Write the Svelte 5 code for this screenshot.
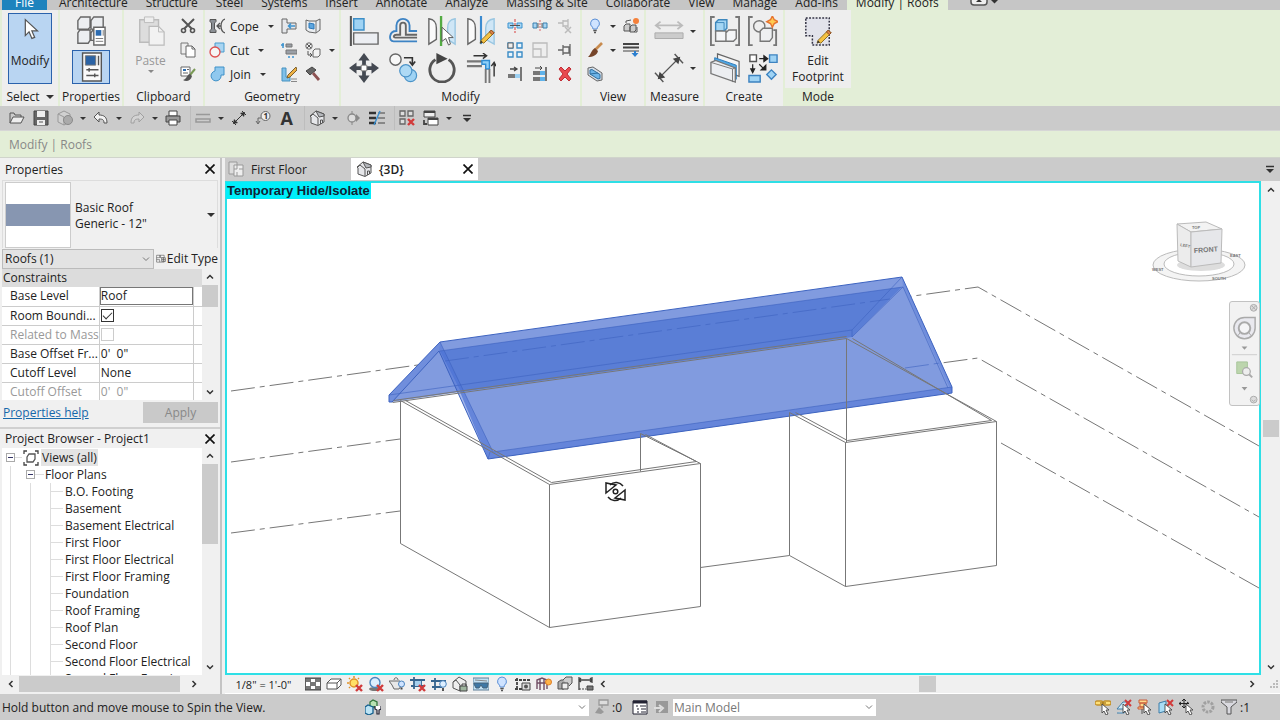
<script lang="ts">
	const menu = [
		'Architecture', 'Structure', 'Steel', 'Systems', 'Insert', 'Annotate', 'Analyze',
		'Massing & Site', 'Collaborate', 'View', 'Manage', 'Add-Ins'
	];

	const floorPlans = [
		'B.O. Footing', 'Basement', 'Basement Electrical', 'First Floor', 'First Floor Electrical',
		'First Floor Framing', 'Foundation', 'Roof Framing', 'Roof Plan', 'Second Floor',
		'Second Floor Electrical', 'Second Floor Framing'
	];

	const quickAccess = [
		'open', 'save', 'sync', 'caret', 'undo', 'caret', 'redo', 'caret', 'print', 'sep',
		'ruler', 'caret', 'dim', 'tag', 'text', 'sep',
		'house', 'caret', 'section', 'thin', 'sep', 'closeViews', 'switch', 'caret', 'more'
	];

	const viewControls = [
		'detail', 'box', 'sun', 'shadow', 'teapot', 'crop', 'cropBulb', 'lock3d', 'glasses',
		'bulb', 'props', 'analytical', 'sets', 'constraint'
	];

	const selectTools = ['links', 'underlay', 'pinned', 'face', 'dragSel', 'ring', 'filter'];

	const cursor = '<path d="M7 5v9l2-2 2 4 2-1-2-4h3z" fill="#fff" stroke="#444" stroke-width=".9"/>';
	const redX = '<path d="M9 9l6 6M15 9l-6 6" stroke="#d13b3b" stroke-width="2.4"/>';
	const bulbShape = '<path d="M8 1a4.5 4.5 0 0 0-2.500 8.200L6 11h4l.5-1.800A4.500 4.500 0 0 0 8 1z" fill="#cfe3ff" stroke="#5b8fd6"/><path d="M6.300 12.500h3.400M7 14.500h2" stroke="#555" stroke-width="1.300"/>';
	const pencil = '<path d="M17 28l-2 1 1-3L27 15l3 3L19 29z" fill="#f5c242" stroke="#8a6a20"/><path d="M25 17l2-2 3 3-2 2z" fill="#d9824b" stroke="#8a4a20"/><path d="M15 29l1-3 2 2z" fill="#333"/>';

	// 16x16 artwork
	const small: Record<string, string> = {
		cut: '<path d="M2 1l10 10M14 1L4 11" stroke="#555" stroke-width="2"/><circle cx="3.500" cy="12.500" r="2" fill="none" stroke="#555" stroke-width="1.600"/><circle cx="12.500" cy="12.500" r="2" fill="none" stroke="#555" stroke-width="1.600"/>',
		copy: '<path d="M1 1h7v11H1z" fill="#eee" stroke="#777"/><path d="M6 4h6l3 3v8H6z" fill="#fff" stroke="#666"/><path d="M12 4v3h3" fill="none" stroke="#666"/>',
		match: '<path d="M1 1h9v9H1z" fill="#fff" stroke="#666"/><path d="M3 3h3v2H3z" fill="#2b6cb0"/><path d="M3 7h5M7 3.500h2" stroke="#666"/><path d="M15 3l-5 6" stroke="#7a9a56" stroke-width="2"/><path d="M10 8c-3 0-3 5-7 6 3 2 8 1 9-4z" fill="#555"/>',
		cope: '<path d="M1 1.500h6v2L5.500 5v6L7 12.500v2H1v-2L2.500 11V5L1 3.500z" fill="#8b8f94" stroke="#555"/><path d="M8 8h4M11 5L8 8l3 3M16 1c-3 1-4 3-4 7s1 6 4 7" stroke="#555" stroke-width="1.300" fill="none"/>',
		cutGeom: '<path d="M6 1h9v9H6z" fill="#a8d5f2" stroke="#4b9bcd"/><circle cx="6" cy="10" r="5" fill="#f5f5f5" stroke="#dd5050" stroke-width="1.300"/>',
		join: '<path d="M6 1h9v8h-3a5 5 0 1 1-6-4z" fill="#8fc8ee" stroke="#3f91c8"/>',
		wallJoin: '<path d="M1 1h5v4l9 0v6H6v4H1z" fill="#e5e7ea" stroke="#666"/><path d="M14 8H8M10 5.500L7.500 8 10 10.500" stroke="#3b93d0" stroke-width="1.500" fill="none"/>',
		beam: '<path d="M5 2h6v3H5zM5 8h11v4H5z" fill="#9a9fa6" stroke="#777"/><path d="M2 1v5M0 3h3M8 14v2M12 14v2" stroke="#3b93d0" stroke-width="1.500"/>',
		paint: '<path d="M1 2v13h8v-4H5V2z" fill="#7ec0ea" stroke="#4792c0"/><path d="M15 1L7 9l-1 3 3-1 7-7z" fill="#eeb042" stroke="#7b6030"/><path d="M10 13h6M10 15.500h6" stroke="#888"/>',
		splitFace: '<path d="M1 2l3 1 7 0 4-2v11l-4 3-7-1-3-2z" fill="#e9ecef" stroke="#666"/><path d="M11 3v12" stroke="#777"/><path d="M4 5l5 1v5l-5-1z" fill="#5da6df" stroke="#2d78b8"/>',
		demolishBox: '<circle cx="4" cy="4" r="3.200" fill="none" stroke="#666"/><path d="M2 6l4-4M2 2l4 4M3 9v4h3M5 11l2 2-2 2" stroke="#555" fill="none"/><path d="M8 9l2-2h5v6l-2 2H8z" fill="#f4f4f4" stroke="#666"/>',
		hammer: '<path d="M1 5l6-4 4 3-6 5z" fill="#666" stroke="#444"/><path d="M8 7l6 7" stroke="#8c5151" stroke-width="2.800"/>',
		split: '<path d="M1 5h5v5H1zM10 5h5v5h-5z" fill="#a8d5f2" stroke="#3b93d0"/><path d="M8 1v14" stroke="#d66" stroke-width="1.300" stroke-dasharray="3 1"/><path d="M3 7.500h10" stroke="#555"/>',
		splitGap: '<path d="M1 5h4v5H1zM11 5h4v5h-4z" fill="#a8d5f2" stroke="#3b80b0"/><path d="M6 5v5M10 5v5" stroke="#666"/><path d="M8 2v12" stroke="#d66" stroke-dasharray="2 1"/>',
		unpin: '<path d="M1 5h5M6 2v7M6 3h5v5H6M11 1v9" stroke="#bbb" fill="none" stroke-width="1.300"/><path d="M8 9l6 6M14 9l-6 6" stroke="#bbb" stroke-width="1.500"/>',
		pin: '<path d="M1 8h5M6 3v10M6 5h6v6H6M13 2v12" stroke="#666" fill="none" stroke-width="1.300"/>',
		array: '<path d="M1 1h5v5H1zM10 1h5v5h-5zM1 10h5v5H1zM10 10h5v5h-5z" fill="#e9f4fb" stroke="#3b8cc6" stroke-width="1.400"/><path d="M1 1h5v5H1z" fill="#eee" stroke="#666"/>',
		scale: '<path d="M1 1h14v14H1zM1 7h8v8" fill="none" stroke="#bcbcbc" stroke-width="1.300"/>',
		trimOne: '<path d="M3 3h6M7 1l3 2-3 2" stroke="#444" fill="none" stroke-width="1.300"/><path d="M1 8h8v4H1z" fill="#777"/><path d="M8 8h5v4H8z" fill="#9cd0f2"/><path d="M14 1v14" stroke="#777" stroke-width="2"/>',
		trimMany: '<path d="M3 2h7M8 0l2 2-2 2" stroke="#444" fill="none"/><path d="M1 5h7v4H1zM1 11h7v4H1z" fill="#777"/><path d="M8 5h5v4H8zM8 11h5v4H8z" fill="#5eb2ea"/><path d="M14 1v14" stroke="#777" stroke-width="2"/>',
		del: '<path d="M2 3l2-2 4 4 4-4 2 2-4 5 4 5-2 2-4-4-4 4-2-2 4-5z" fill="#e84b50" stroke="#c12c35"/>',
		bulb: bulbShape,
		brush: '<path d="M15 1L8 8" stroke="#c88b4e" stroke-width="2.600"/><path d="M8 6l3 3c-1 4-5 6-10 6 3-2 3-7 7-9z" fill="#76452a"/>',
		hiddenBox: '<path d="M1 2l5-1 9 6v7l-5 1-9-6z" fill="#d3dce6" stroke="#666"/><path d="M3 4l2-.5 8 5v4l-2 .5-8-5z" fill="#6db4e8" stroke="#2f6f9f"/><path d="M3 8l8-1" stroke="#2f6f9f"/>',
		override: '<path d="M3 5V3l5-1M14 9v5h-3" stroke="#555" fill="none"/><path d="M1 8l2-2h4v7H1zM7 9l2-2h4v5l-2 2H7z" fill="#ccc" stroke="#555"/><circle cx="13" cy="3" r="3" fill="#f5803a"/>',
		lineWork: '<path d="M0 2h16M0 5.500h16" stroke="#444" stroke-width="2"/><path d="M0 9h16" stroke="#444" stroke-width="1"/><path d="M11 9v2H8.500l3.500 4 3.500-4H13V9z" fill="#2c7fd0"/>',
		open: '<path d="M1 13V3h4l1 2h6v2" fill="none" stroke="#555"/><path d="M1 13l3-6h11l-3 6z" fill="#eee" stroke="#555"/>',
		save: '<path d="M1 1h14v14H1z" fill="#666" stroke="#444"/><path d="M4 1h8v6H4zM4 10h8v5H4z" fill="#eee"/><path d="M6 12h4" stroke="#555"/>',
		sync: '<path d="M1 4l6-3 6 3v8l-6 3-6-3z" fill="#d0d0d0" stroke="#999"/><path d="M1 4l6 3v8" stroke="#999" fill="none"/><circle cx="11" cy="10" r="4.500" fill="#aaa" stroke="#8a8a8a"/>',
		undo: '<path d="M1 7l5-5v3c5 0 8 2 8 8h-3c0-3-1-4-5-4v3z" fill="#f2f2f2" stroke="#555"/>',
		redo: '<path d="M15 7l-5-5v3c-5 0-8 2-8 8h3c0-3 1-4 5-4v3z" fill="#d3d3d3" stroke="#a0a0a0"/>',
		print: '<path d="M4 1h8v5H4z" fill="#fff" stroke="#444"/><path d="M1 6h14v6H1z" fill="#999" stroke="#444"/><path d="M4 10h8v5H4z" fill="#fff" stroke="#444"/>',
		ruler: '<path d="M1 4.500h14M1 9h14v3H1z" stroke="#999" stroke-width="1.500" fill="#ccc"/>',
		dim: '<path d="M3 13L13 3M1 11l4 4M11 1l4 4" stroke="#333"/><path d="M2 14l1-5 4 4zM14 2l-5 1 4 4z" fill="#333"/>',
		tag: '<circle cx="10.500" cy="6" r="4.500" fill="#eee" stroke="#666"/><path d="M6 8H3v5M1 11l2 3 2-3" fill="none" stroke="#666"/><text x="8.500" y="9" font-size="8" font-weight="bold" fill="#333">1</text>',
		text: '<text x="1.500" y="15" font-size="18" font-weight="bold" fill="#333">A</text>',
		house: '<path d="M1 6l6-5 8 3v8l-6 3.500L2 13V7z" fill="#e6e7ea" stroke="#555"/><path d="M7 1l3 6 5-1V4z" fill="#b4b7bc" stroke="#555"/><path d="M1 7l3-3 5 4v7M11.500 14v-4h2v3" fill="none" stroke="#555"/>',
		section: '<circle cx="7" cy="8" r="4" fill="#ddd" stroke="#888" stroke-width="1.300"/><path d="M11 4l4 4-4 4z" fill="#888"/><path d="M7 1v3M7 12v3" stroke="#888"/>',
		thin: '<path d="M0 3h7M0 8h7M0 13h7" stroke="#333" stroke-width="2.500"/><path d="M9 3h7M9 8h7M9 13h7" stroke="#444"/><path d="M11 1L5 15" stroke="#3b8fd0" stroke-width="1.500"/>',
		closeViews: '<path d="M1 1h5v5H1zM9 1h5v5H9zM1 9h5v5H1z" fill="#ddd" stroke="#666" stroke-width="1.300"/>' + redX,
		switch: '<path d="M1 1h11v6H1z" fill="#eee" stroke="#444"/><path d="M5 8h10v7H5z" fill="#fff" stroke="#444"/><path d="M1 2h11M5 9h10M1 10v4h3" stroke="#444" fill="none" stroke-width="1.800"/>',
		more: '<path d="M4 5.500h8" stroke="#333" stroke-width="1.500"/><path d="M4 8h8l-4 4z" fill="#333"/>',
		plan: '<path d="M1 1h8v12H1z" fill="#ddd" stroke="#999"/><path d="M6 4h9v11H6zM9 4v4H6M11 8h4M9 11v4" fill="#eee" stroke="#999"/>',
		editType: '<path d="M1 2h12v11H1zM1 6h5V2M7 2v4h6M6 13V9H1" fill="#fff" stroke="#555"/><path d="M9 6h6v6H9zM9 9h6M12 6v6" fill="#ddd" stroke="#555"/>',
		views: '<path d="M4 1H1v3M12 1h3v3M4 15H1v-3M12 15h3v-3" fill="none" stroke="#444" stroke-width="1.300"/><path d="M4 7l2-3h6v5l-2 3H4z" fill="#fff" stroke="#555" stroke-width="1.300"/>',
		detail: '<path d="M0 2h16v12H0z" fill="#777" stroke="#444"/><path d="M1 6h4v4H1zM6 3h4v3H6zM11 6h4v4h-4zM6 10h4v3H6z" fill="#fff"/>',
		box: '<path d="M1 7l4-4h10v6l-4 4H1z" fill="#fff" stroke="#555"/><path d="M1 7h10v6M11 7l4-4" fill="none" stroke="#555"/>',
		sun: '<circle cx="7" cy="7" r="4" fill="#ffe066" stroke="#e0932a" stroke-width="1.500"/><path d="M7 0v2M0 7h2M2 2l1 1M12 2l-1 1M2 12l1-1" stroke="#e0932a" stroke-width="1.500"/>' + redX,
		shadow: '<ellipse cx="7" cy="13" rx="6" ry="2" fill="#777"/><circle cx="7" cy="6.500" r="5" fill="#dceeff" stroke="#4b84bd" stroke-width="1.400"/>' + redX,
		teapot: '<path d="M3 5h8l1 5-2 3H5L3 9 0 5zM5 4c0-3 4-3 4 0" fill="#e8e8e8" stroke="#666"/><circle cx="12.500" cy="8" r="3" fill="#cfe3ff" stroke="#4b84bd"/><path d="M11.500 12.500h2" stroke="#444" stroke-width="2"/>',
		crop: '<path d="M4 1v12M0 4h15M1 10h14M11 3v8" stroke="#36658f" stroke-width="1.800"/><path d="M5 5h6v5H5z" fill="#a5d0ee"/>' + redX,
		cropBulb: '<path d="M4 2v12M0 5h15M1 11h10" stroke="#36658f" stroke-width="1.800"/><circle cx="12" cy="8" r="3.300" fill="#dceeff" stroke="#4b84bd"/><path d="M12 12v3" stroke="#555" stroke-width="2"/>',
		lock3d: '<path d="M1 6l6-5 7 4v8l-6 2-7-3z" fill="#eee" stroke="#555"/><path d="M1 6l3-2 4 5v6" fill="none" stroke="#555"/><path d="M8 10h7v5H8z" fill="#9fb69f" stroke="#444"/><path d="M10 10V8h4v2" fill="none" stroke="#444"/>',
		glasses: '<path d="M0 2h16v12H0z" fill="#c3e2f5" stroke="#5e7f97"/><path d="M2 4l12 1" stroke="#888"/><path d="M1 7h14v1l-1 4h-4L8 9l-2 3H3L1 8z" fill="#3f78a5" stroke="#44637a"/>',
		props: '<path d="M2 2v12M0 4h16M0 13h8" stroke="#444" stroke-width="1.800" stroke-dasharray="3 1"/><path d="M7 7h8v7H7z" fill="#ddd" stroke="#444"/><circle cx="11" cy="10.500" r="2" fill="#555"/>',
		analytical: '<path d="M1 13V4l5-2 5 2v9M1 7h10M4 3v11M8 3v11" fill="none" stroke="#704d64" stroke-width="1.400"/><circle cx="12.500" cy="6" r="3" fill="#ffb44a" stroke="#dd7f28"/>',
		sets: '<path d="M1 6l3-2h6v6l-3 3H1z" fill="#aaa" stroke="#555"/><path d="M6 4l3-3h6v6l-3 3" fill="#ccc" stroke="#555"/><path d="M5 7h6v6H5z" fill="#eee" stroke="#444"/>',
		constraint: '<path d="M1 1v13M14 1v6M1 4h13M3 2L1 4l2 2M12 2l2 2-2 2" fill="none" stroke="#444" stroke-width="1.300"/><path d="M9 10h6v4H9z" fill="#777" stroke="#444"/><path d="M1 13h7" stroke="#444" stroke-dasharray="2 1"/>',
		workset: '<path d="M5 3l3-2 4 2v5H5z" fill="#b9e3b3" stroke="#33763c" stroke-width="1.300"/><path d="M0 8l3-2 5 2v6l-4 2-4-2z" fill="#bce4f5" stroke="#15608f" stroke-width="1.300"/><path d="M10 7v3l2 1v4h2v-4l2-1V7" fill="#fff" stroke="#223" stroke-width="1.200"/>',
		editable: '<path d="M5 1h9v5H5zM8 6v3" fill="#ddd" stroke="#999" stroke-width="1.300"/><path d="M1 14l4-6 5 5-3 2z" fill="#999"/>',
		options: '<path d="M1 2h14v13H1z" fill="#fff" stroke="#223"/><path d="M1 3h14" stroke="#223" stroke-width="3"/><path d="M4 7h2M8 7h6M5 10h2M9 10h5M5 13h2M9 13h5" stroke="#223"/>',
		exclude: '<path d="M3 2h12v12H3z" fill="#999"/><path d="M1 9h7M6 6l4 3-4 4" fill="none" stroke="#ddd" stroke-width="2"/>',
		links: '<rect x="0" y="2" width="8" height="4" rx="2" fill="#ffdf75" stroke="#c3922c" stroke-width="1.300"/><rect x="8" y="2" width="8" height="4" rx="2" fill="#ffdf75" stroke="#c3922c" stroke-width="1.300"/><path d="M5 4h6" stroke="#a87a1c" stroke-width="1.300"/>' + cursor,
		underlay: '<path d="M1 10l6-7h6l-3 7zM1 14h7l2-3" fill="#d2ecf9" stroke="#3f7da8"/><path d="M9 1l6 6M15 1L9 7" stroke="#d13b3b" stroke-width="2"/>' + cursor,
		pinned: '<path d="M2 1h8v3H2zM3 4h6v4H3zM1 8h10v2H1z" fill="#ffd98a" stroke="#c85a3a"/><path d="M5 10v5" stroke="#555"/>' + cursor,
		face: '<path d="M1 4l7-2v10l-7 2z" fill="#a9dcf5" stroke="#3f7da8"/><path d="M9 1l6 6M15 1L9 7" stroke="#d13b3b" stroke-width="2"/>' + cursor,
		dragSel: '<path d="M5 0v9M0 4.500h10M3 2l2-2 2 2M3 7l2 2 2-2M2 3L0 4.500 2 6M8 3l2 1.500" stroke="#222" fill="none"/>' + cursor,
		ring: '<circle cx="8" cy="8" r="5" fill="none" stroke="#a0a0a0" stroke-width="3" stroke-dasharray="2.500 1.200"/>',
		filter: '<path d="M0 1h16v2l-6 5v7H6V8L0 3z" fill="#d9d9df" stroke="#555"/><path d="M4 3h8" stroke="#999" stroke-width="1.500"/>'
	};

	// 32x32 artwork
	const large: Record<string, string> = {
		modify: '<path d="M11 6v17l4-4 3 7 3-1-3-7h6z" fill="#fff" stroke="#555" stroke-width="1.300"/>',
		typeProps: '<path d="M2 5l3-4h10v11l-2 2H2zM16 5l3-4h10v11l-3 2H16zM2 18l2-3h11v11l-2 3H2zM16 18l2-3h10v11H16z" fill="#eceef1" stroke="#666" stroke-width="1.500"/><path d="M19 12h12v19H19z" fill="#fff" stroke="#666" stroke-width="1.500"/><path d="M21 15h6v6h-6z" fill="#2c6bb0"/><path d="M21 24h8M21 27h8M29 15v6" stroke="#777"/>',
		palette: '<path d="M7 1h20v30H7z" fill="#fafafa" stroke="#555" stroke-width="1.500"/><path d="M10 4h11v10H10z" fill="#2b63a5" stroke="#777"/><path d="M24 4v10M11 19h13M11 25h13M14 17v4M20 23v4" stroke="#555" stroke-width="1.500"/>',
		paste: '<path d="M4 4h20v24H4z" fill="#ddd" stroke="#bbb" stroke-width="1.500"/><path d="M9 1h10v6H9z" fill="#eee" stroke="#bbb"/><path d="M14 11h10l6 6v14H14z" fill="#f2f2f2" stroke="#bbb" stroke-width="1.300"/><path d="M24 11v6h6" fill="none" stroke="#bbb"/>',
		align: '<path d="M2 0v32" stroke="#555" stroke-width="2.200"/><path d="M5 3h11v12H5z" fill="#9fd3f4" stroke="#3d8fc8" stroke-width="1.500"/><path d="M5 18h26v12H5z" fill="#eceef2" stroke="#666" stroke-width="1.500"/>',
		offset: '<path d="M31 27H6c-6 0-5-11 3-11V10a7 7 0 0 1 14 0v6h8" fill="none" stroke="#3d83c4" stroke-width="2"/><path d="M31 23H8c-3 0-2-3 1-3h4V10a3 3 0 0 1 6 0v10h12" fill="none" stroke="#666" stroke-width="2"/>',
		mirrorPick: '<path d="M2 3c7 1 8 5 8 10v12L2 30z" fill="#fafafa" stroke="#666" stroke-width="1.500"/><path d="M30 3c-7 1-8 5-8 10v12l8 5z" fill="#cfe6f6" stroke="#9ac7e2" stroke-width="1.500"/><path d="M15 0v32" stroke="#54ab43" stroke-width="2.500"/><path d="M16 12v15l4-3 3 7 2-1-2-7h5z" fill="#fff" stroke="#555"/>',
		mirrorDraw: '<path d="M2 3c7 1 8 5 8 10v12L2 30z" fill="#fafafa" stroke="#666" stroke-width="1.500"/><path d="M30 3c-7 1-9 5-9 10v12l9 5z" fill="#cfe6f6" stroke="#9ac7e2" stroke-width="1.500"/><path d="M16 0v30" stroke="#3b8bd0" stroke-width="2.300"/>' + pencil,
		move: '<path d="M16 0l6 8h-4v5h-4V8h-4zM16 32l6-8h-4v-5h-4v5h-4zM0 16l8-6v4h5v4H8v4zM32 16l-8-6v4h-5v4h5v4z" fill="#444952"/><path d="M13 13h6v6h-6z" fill="#fff" stroke="#777"/>',
		copyTool: '<circle cx="8" cy="7" r="6" fill="#f8f8f8" stroke="#666" stroke-width="1.500"/><path d="M17 5h9v7M23 9l3 4 3-4" stroke="#333" stroke-width="1.700" fill="none"/><circle cx="24" cy="24" r="6.500" fill="#9fd3f4" stroke="#4b93c8" stroke-width="1.300"/><circle cx="19" cy="19" r="6.500" fill="#aedaf5" stroke="#4b93c8" stroke-width="1.300"/>',
		rotate: '<path d="M9 7a13 13 0 1 0 14 0" fill="none" stroke="#555" stroke-width="3"/><path d="M10 0l12 6-12 6z" fill="#444"/>',
		trim: '<path d="M1 9h17M1 14h16" stroke="#777" stroke-width="2.500"/><path d="M17 8h8v9h-4v-5h-4z" fill="#8fd0f8" stroke="#2f8bd2" stroke-width="1.500"/><path d="M21 17v15M25 17v15" stroke="#777" stroke-width="2"/><path d="M8 3h13M18 0l4 3-4 3M30 25V11M27 14l3-4 2 4" stroke="#333" stroke-width="1.500" fill="none"/>',
		measure: '<path d="M2 10h28M7 6l-5 4 5 4M25 6l5 4-5 4" fill="none" stroke="#bbb" stroke-width="2"/><path d="M1 18h30v6H1z" fill="#ccc" stroke="#aaa"/>',
		aligned: '<path d="M6 26L26 6M1 21l9 10M22 1l9 10" stroke="#555" stroke-width="1.500"/><path d="M4 28l2-8 6 6zM28 4l-8 2 6 6z" fill="#444"/>',
		similar: '<path d="M5 1H1v30h4M27 1h4v30h-4" fill="none" stroke="#777" stroke-width="2"/><path d="M6 7l3-3h9v9l-3 3H6z" fill="#a4d6f4" stroke="#3e88bd" stroke-width="1.500"/><path d="M6 16h11v11H6zM17 18l3-3h8v9l-3 3h-8z" fill="#f4f5f7" stroke="#777" stroke-width="1.500"/><path d="M6 7h9v9" fill="none" stroke="#3e88bd"/>',
		group: '<path d="M5 1H1v30h4M27 15h3v16h-3" fill="none" stroke="#777" stroke-width="2"/><circle cx="12" cy="11" r="6" fill="#eee" stroke="#777" stroke-width="1.500"/><path d="M13 16l3-3h10v10l-3 4H13z" fill="#eef0f2" stroke="#777" stroke-width="1.500"/><path d="M26 0l2 4 4 2-4 2-2 4-2-4-4-2 4-2z" fill="#ffcb52" stroke="#e7732e" stroke-width="1.500"/>',
		assembly: '<path d="M8 1l23 8v16l-23-9z" fill="#f5f5f5" stroke="#666" stroke-width="1.300"/><path d="M5 5l23 8v15L5 20z" fill="#50a8e5" stroke="#2778b9"/><path d="M1 10l5-2 21 8v15L1 22z" fill="#eceef1" stroke="#777" stroke-width="1.400"/><path d="M1 10l23 7v14M24 17l3-1" fill="none" stroke="#777"/>',
		parts: '<path d="M2 2h7v7H2z" fill="#fff" stroke="#555" stroke-width="1.500"/><path d="M23 2h8v8h-8zM1 24h12v7H1z" fill="#9fd3f4" stroke="#3d83c0" stroke-width="1.500"/><path d="M25 18l5 5-5 5-5-5z" fill="#9fd3f4" stroke="#3d83c0" stroke-width="1.500"/><path d="M12 6h7M17 3l4 3-4 3zM5 12v6M3 17l2 4 2-4zM12 12l6 6M14 18h5v-5z" stroke="#222" stroke-width="1.300" fill="#222"/>',
		footprint: '<path d="M3 2h25v29H10V21H3z" fill="#e2e3eb" stroke="#334" stroke-width="1.600" stroke-dasharray="2 1.500"/>' + pencil
	};

	let scope = $state('Main Model');
	let baseLevel = $state('Roof');
	let roomBounding = $state(true);
</script>

{#snippet icon(name: string)}
	<svg class="icon" viewBox="0 0 16 16" aria-hidden="true">{@html small[name]}</svg>
{/snippet}

{#snippet big(name: string)}
	<svg class="big" viewBox="0 0 32 32" aria-hidden="true">{@html large[name]}</svg>
{/snippet}

{#snippet chevron(dir: string)}
	<svg class="chevron {dir}" viewBox="0 0 8 8" aria-hidden="true"><path d="M1 5.500l3-3 3 3" fill="none" stroke="#333" stroke-width="1.500" /></svg>
{/snippet}

{#snippet cross()}
	<svg class="cross" viewBox="0 0 10 10" aria-hidden="true"><path d="M0.500 0.500l9 9M9.500 0.500l-9 9" stroke="#111" stroke-width="1.700" /></svg>
{/snippet}

<div class="app">
	<nav class="menu">
		<button class="file">File</button>
		{#each menu as item}
			<button>{item}</button>
		{/each}
		<button class="current">Modify | Roofs</button>
		<button class="collapse" aria-label="Collapse ribbon">
			<svg viewBox="0 0 28 10"><rect x="1" y="-6" width="16" height="11" rx="3" fill="#eee" stroke="#555" stroke-width="1.500" /><path d="M6 2l3-3 3 3z" fill="#333" /><path d="M21 0h7l-3.500 3.500z" fill="#333" /></svg>
		</button>
	</nav>

	<div class="ribbon">
		<section class="panel select">
			<div class="body"><button class="tool modify">{@render big('modify')}<span>Modify</span></button></div>
			<h2>Select <i class="caret wide"></i></h2>
		</section>
		<section class="panel properties">
			<div class="body stack">
				<button>{@render big('typeProps')}</button>
				<button class="pressed">{@render big('palette')}</button>
			</div>
			<h2>Properties</h2>
		</section>
		<section class="panel clipboard">
			<div class="body">
				<button class="tool faded">{@render big('paste')}<span>Paste</span><i class="caret"></i></button>
				<div class="icons one">
					{#each ['cut', 'copy', 'match'] as name}<button>{@render icon(name)}</button>{/each}
				</div>
			</div>
			<h2>Clipboard</h2>
		</section>
		<section class="panel geometry">
			<div class="body">
				<div class="icons labelled">
					<button>{@render icon('cope')} Cope <i class="caret"></i></button>
					<button>{@render icon('cutGeom')} Cut <i class="caret"></i></button>
					<button>{@render icon('join')} Join <i class="caret"></i></button>
				</div>
				<div class="icons two">
					<button>{@render icon('wallJoin')}</button>
					<button>{@render icon('splitFace')}</button>
					<i></i>
					<button>{@render icon('beam')}</button>
					<button>{@render icon('demolishBox')}</button>
					<i class="caret"></i>
					<button>{@render icon('paint')}</button>
					<button>{@render icon('hammer')}</button>
				</div>
			</div>
			<h2>Geometry</h2>
		</section>
		<section class="panel editing">
			<div class="body">
				<div class="bigs four">
					{#each ['align', 'offset', 'mirrorPick', 'mirrorDraw', 'move', 'copyTool', 'rotate', 'trim'] as name}
						<button>{@render big(name)}</button>
					{/each}
				</div>
				<div class="icons three">
					{#each ['split', 'splitGap', 'unpin', 'array', 'scale', 'pin', 'trimOne', 'trimMany', 'del'] as name}
						<button>{@render icon(name)}</button>
					{/each}
				</div>
			</div>
			<h2>Modify</h2>
		</section>
		<section class="panel view">
			<div class="body">
				<div class="icons menus">
					<button>{@render icon('bulb')}</button><i class="caret"></i><button>{@render icon('override')}</button>
					<button>{@render icon('brush')}</button><i class="caret"></i><button>{@render icon('lineWork')}</button>
					<button>{@render icon('hiddenBox')}</button>
				</div>
			</div>
			<h2>View</h2>
		</section>
		<section class="panel measure">
			<div class="body">
				<div class="bigs menus">
					<button>{@render big('measure')}</button><i class="caret"></i>
					<button>{@render big('aligned')}</button><i class="caret"></i>
				</div>
			</div>
			<h2>Measure</h2>
		</section>
		<section class="panel create">
			<div class="body">
				<div class="bigs pair">
					{#each ['similar', 'group', 'assembly', 'parts'] as name}<button>{@render big(name)}</button>{/each}
				</div>
			</div>
			<h2>Create</h2>
		</section>
		<section class="panel mode">
			<div class="body"><button class="tool">{@render big('footprint')}<span>Edit<br />Footprint</span></button></div>
			<h2>Mode</h2>
		</section>
	</div>

	<div class="quick">
		{#each quickAccess as name}
			{#if name === 'caret'}
				<button class="drop" aria-label="More"><i class="caret"></i></button>
			{:else if name === 'sep'}
				<span class="sep"></span>
			{:else}
				<button class="item">{@render icon(name)}</button>
			{/if}
		{/each}
	</div>

	<div class="options">Modify | Roofs</div>

	<div class="work">
		<aside>
			<section class="dock props">
				<header><h3>Properties</h3><button aria-label="Close">{@render cross()}</button></header>
				<button class="type">
					<span class="swatch"></span>
					<span class="name">Basic Roof<br />Generic - 12"</span>
					<i class="caret wide"></i>
				</button>
				<div class="instance">
					<select aria-label="Selection"><option>Roofs (1)</option></select>
					<button>{@render icon('editType')}Edit Type</button>
				</div>
				<div class="grid">
					<table>
						<colgroup><col class="key" /><col class="value" /><col /></colgroup>
						<tbody>
							<tr class="group"><th colspan="3">Constraints</th></tr>
							<tr><th><label for="base">Base Level</label></th><td><input id="base" type="text" bind:value={baseLevel} /></td><td></td></tr>
							<tr><th><label for="room">Room Boundi...</label></th><td><input id="room" type="checkbox" bind:checked={roomBounding} /></td><td></td></tr>
							<tr class="faded"><th><label for="mass">Related to Mass</label></th><td><input id="mass" type="checkbox" disabled /></td><td></td></tr>
							<tr><th>Base Offset Fr...</th><td>0'&nbsp; 0"</td><td></td></tr>
							<tr><th>Cutoff Level</th><td>None</td><td></td></tr>
							<tr class="faded"><th>Cutoff Offset</th><td>0'&nbsp; 0"</td><td></td></tr>
						</tbody>
					</table>
					<div class="vbar">{@render chevron('up')}<span class="thumb"></span>{@render chevron('down')}</div>
				</div>
				<footer><a href="#help">Properties help</a><button disabled>Apply</button></footer>
			</section>

			<section class="dock browser">
				<header><h3>Project Browser - Project1</h3><button aria-label="Close">{@render cross()}</button></header>
				<div class="tree">
					<div class="nodes">
						<div class="node root"><button class="fold" aria-label="Collapse"></button><i class="link"></i>{@render icon('views')}<span class="active">Views (all)</span></div>
						<div class="branch">
							<div class="node"><button class="fold" aria-label="Collapse"></button><i class="link"></i><span>Floor Plans</span></div>
							<div class="branch inner">
								<ul>
									{#each floorPlans as plan}
										<li>{plan}</li>
									{/each}
								</ul>
							</div>
						</div>
					</div>
					<div class="vbar">{@render chevron('up')}<span class="thumb"></span>{@render chevron('down')}</div>
				</div>
				<div class="hbar">{@render chevron('left')}<span class="thumb"></span>{@render chevron('right')}</div>
			</section>
		</aside>

		<main>
			<div class="tabs">
				<button class="tab">{@render icon('plan')}First Floor</button>
				<button class="tab open">{@render icon('house')}<b>{'{3D}'}</b>{@render cross()}</button>
				<button class="list" aria-label="Tab list">{@render icon('more')}</button>
			</div>
			<div class="stage">
				<div class="canvas">
					<svg class="scene" viewBox="227 183 1032 490">
						<g class="levels">
							<path d="M231 391L978 287L1259 446" />
							<path d="M231 462L400 439M905 368L978 358L1259 517" />
							<path d="M231 533L400 511M1001 443L1259 588" />
						</g>
						<path d="M440 342L902 277L952 387V393L488 459L460 392L392 402H389V395Z" fill="#819bdf" />
						<path d="M440 351L902 287L852 337L461 392Z" fill="#5a7ed6" />
						<path d="M440 342L493 452L952 387V393L488 459L439 351Z" fill="#4a70d6" fill-opacity=".5" />
						<path d="M389 395L440 342L439 351L392 402H389Z" fill="#4a70d6" fill-opacity=".3" />
						<path d="M902 277L952 387V393L903 287Z" fill="#4a70d6" fill-opacity=".3" />
						<g class="roof">
							<path d="M389 395L440 342L902 277L952 387V393L488 459L439 351L392 402H389Z" />
							<path class="hidden" d="M440 342L493 452L952 387M389 395L852 330L902 277M440 351L903 287L948 388M903 287L852 337M490 452L488 459M852 330V337" />
							<path class="hidden" stroke-dasharray="24 5 5 5" d="M445 361L890 299M905 368L940 363" />
						</g>
						<g class="walls" transform="translate(.5 .5)">
							<path d="M400 400V543L549 627L700 606V463L549 484V627M400 400L549 484M405 400L551 482L696 461L645 434M640 433L700 463M640 433V471" />
							<path d="M392 402L846 338V442M393 400L846 336M700 567L789 555V412L845 442V586L789 555M845 586L996 565V421L845 442M795 412L847 440L991 420L852 338M846 338L996 421" />
						</g>

						<g class="orbit">
							<path d="M606 483v10l10-8zM625 500v-10l-10 8z" />
							<path d="M610 485c4-4 10-3 13 1M621 498c-4 4-10 3-13-1" />
							<circle cx="615.500" cy="491.500" r="2.300" />
						</g>

						<g class="cube">
							<ellipse cx="1199" cy="265" rx="46" ry="16" fill="#f4f4f4" />
							<ellipse cx="1199" cy="264" rx="35" ry="12" fill="#fff" />
							<ellipse cx="1201" cy="265" rx="24" ry="6" fill="#ddd" stroke="none" />
							<path d="M1177 224L1206 222L1222 229L1191 232Z" fill="#f3f3f3" />
							<path d="M1177 224L1191 232V267L1178 261Z" fill="#ececec" />
							<path d="M1191 232L1222 229L1221 263L1191 267Z" fill="#e6e7ea" />
							<text class="face" x="1194" y="253" transform="rotate(-4 1194 253)">FRONT</text>
							<text class="tiny" x="1180" y="246" transform="rotate(12 1180 246)">LEFT</text>
							<text class="tiny" x="1192" y="229">TOP</text>
							<text class="tiny" x="1152" y="271">WEST</text>
							<text class="tiny" x="1212" y="280">SOUTH</text>
							<text class="tiny" x="1230" y="257">EAST</text>
						</g>
					</svg>
					<strong class="badge">Temporary Hide/Isolate</strong>
					<div class="wheel">
						<svg viewBox="0 0 30 107" aria-hidden="true">
							<g fill="none" stroke="#aaa">
								<circle cx="24.500" cy="6" r="3.500" fill="#ddd" /><path d="M22.500 4l4 4M26.500 4l-4 4" />
								<circle cx="24.500" cy="101" r="3.500" fill="#ddd" /><path d="M22.500 101l2 2 2-2" />
								<path d="M2 54.500h26" stroke="#ccc" />
								<path d="M15 16h11v11a11 11 0 1 1-11-11z" fill="#e9e9ef" stroke-width="1.500" />
								<circle cx="15" cy="27" r="6" fill="#f5f5f7" stroke-width="2" /><path d="M11 31l-3 4M19 31l3 4" />
								<path d="M7 62h11v12H7z" fill="#bcd5ad" stroke="#a8c59a" />
								<circle cx="17" cy="72" r="4" fill="#eee" stroke-width="1.300" /><path d="M20 75l3 3" stroke-width="2" />
							</g>
							<path d="M12 46h6l-3 3.500zM12 88h6l-3 3.500z" fill="#999" />
						</svg>
					</div>
				</div>
				<div class="vbar plain">{@render chevron('up')}<span class="thumb"></span>{@render chevron('down')}</div>
			</div>
			<div class="controls">
				<button class="ratio">1/8" = 1'-0"</button>
				{#each viewControls as name}<button class="item">{@render icon(name)}</button>{/each}
				<div class="hbar">{@render chevron('left')}<span class="thumb"></span>{@render chevron('right')}</div>
				<svg class="grip" viewBox="0 0 10 10" aria-hidden="true"><path d="M8 1h2v2H8zM5 4h2v2H5zM8 4h2v2H8zM2 7h2v2H2zM5 7h2v2H5zM8 7h2v2H8z" fill="#bbb" /></svg>
			</div>
		</main>
	</div>

	<footer class="status">
		<span class="hint">Hold button and move mouse to Spin the View.</span>
		{@render icon('workset')}
		<select class="sets" aria-label="Active workset"><option></option></select>
		<button class="item">{@render icon('editable')}</button>
		<span class="count">:0</span>
		<button class="item">{@render icon('options')}</button>
		<button class="item">{@render icon('exclude')}</button>
		<select class="design" aria-label="Design option" bind:value={scope}><option>Main Model</option></select>
		<div class="picks">
			{#each selectTools as name}<button class="item">{@render icon(name)}</button>{/each}
			<span>:1</span>
		</div>
	</footer>
</div>

<style>
	:global(body) {
		font-family: 'Open Sans', 'Noto Sans', sans-serif;
		font-size: 12px;
		color: #222;
	}
	* {
		box-sizing: border-box;
	}
	button,
	select,
	input {
		font: inherit;
		color: inherit;
		margin: 0;
		padding: 0;
		border: none;
		background: none;
		white-space: nowrap;
	}
	h2,
	h3,
	ul {
		margin: 0;
		padding: 0;
		font-size: 12px;
		font-weight: 400;
		list-style: none;
	}
	svg {
		display: block;
		flex: none;
	}
	.icon {
		width: 16px;
		height: 16px;
	}
	.big {
		width: 30px;
		height: 30px;
	}
	.cross {
		width: 10px;
		height: 10px;
	}
	.chevron {
		width: 8px;
		height: 8px;
	}
	.down {
		transform: rotate(180deg);
	}
	.left {
		transform: rotate(-90deg);
	}
	.right {
		transform: rotate(90deg);
	}
	.caret {
		display: inline-block;
		width: 6px;
		border: 3px solid transparent;
		border-top-color: #333;
		border-bottom: none;
		align-self: center;
	}
	.caret.wide {
		width: 8px;
		border-width: 4px 4px 0;
	}
	.app {
		display: flex;
		flex-direction: column;
		height: 100vh;
		overflow: hidden;
		background: #f0f0f0;
	}

	.menu {
		display: flex;
		align-items: flex-end;
		flex: none;
		height: 10px;
		padding-left: 2px;
		background: #c6c6c6;
		overflow: hidden;
	}
	.menu button {
		padding: 0 9px;
		line-height: 14px;
	}
	.menu .file {
		padding: 0 13px;
		margin-right: 3px;
		background: #1d83bd;
		color: #fff;
	}
	.menu .current {
		background: #e3eed7;
	}
	.menu .collapse {
		padding: 0 22px;
	}
	.collapse svg {
		width: 28px;
		height: 10px;
	}

	.ribbon {
		display: flex;
		flex: none;
		height: 96px;
		gap: 2px;
		padding: 0 2px;
		background: #e3eed7;
	}
	.panel {
		display: flex;
		flex-direction: column;
		background: #eee;
	}
	.panel .body {
		display: flex;
		justify-content: center;
		flex: 1;
	}
	.panel h2 {
		display: flex;
		justify-content: center;
		gap: 6px;
		line-height: 18px;
	}
	.select { width: 56px; }
	.properties { width: 62px; }
	.clipboard { width: 79px; }
	.geometry { width: 134px; }
	.editing { width: 239px; }
	.view { width: 62px; }
	.measure { width: 57px; }
	.create { width: 78px; }
	.mode { width: 66px; }
	.tool {
		display: flex;
		flex-direction: column;
		align-items: center;
		align-self: flex-start;
		margin-top: 6px;
		line-height: 16px;
	}
	.tool span {
		margin-top: 7px;
	}
	.tool.modify {
		width: 44px;
		height: 71px;
		margin-top: 3px;
		border: 1px solid #2a62ac;
		background: #b9d5f2;
	}
	.tool.modify span {
		margin-top: 9px;
	}
	.faded {
		color: #999;
	}
	.clipboard .body {
		padding-left: 4px;
	}
	.tool .caret {
		margin-top: 1px;
	}
	.faded .caret {
		border-top-color: #888;
	}
	.stack {
		flex-direction: column;
		align-items: center;
		gap: 4px;
		padding: 6px 0 3px;
	}
	.panel .stack {
		justify-content: flex-start;
	}
	.pressed {
		padding: 1px 3px;
		border: 1px solid #2a62ac;
		background: #b9d5f2;
	}
	.icons {
		display: grid;
		align-content: start;
		padding-top: 8px;
		row-gap: 8px;
	}
	.icons.one {
		margin-left: 14px;
	}
	.labelled {
		width: 72px;
	}
	.labelled button {
		display: flex;
		align-items: center;
		gap: 5px;
		height: 16px;
	}
	.labelled .caret {
		margin-left: 4px;
	}
	.icons.two {
		grid-template-columns: 16px 16px 6px;
		column-gap: 8px;
	}
	.icons.three {
		grid-template-columns: repeat(3, 16px);
		column-gap: 9px;
		margin-left: 11px;
	}
	.view .menus {
		grid-template-columns: 16px 6px 16px;
		column-gap: 7px;
	}
	.bigs {
		display: grid;
		align-content: start;
		padding-top: 6px;
		row-gap: 7px;
	}
	.four {
		grid-template-columns: repeat(4, 30px);
		column-gap: 9px;
	}
	.measure .menus {
		grid-template-columns: 30px 6px;
		column-gap: 6px;
	}
	.pair {
		grid-template-columns: 30px 30px;
		column-gap: 8px;
	}
	.mode {
		background: #e3eed7;
	}
	.mode .body {
		background: #eee;
	}

	.quick {
		display: flex;
		align-items: center;
		flex: none;
		height: 25px;
		padding-left: 5px;
		background: #cbcbcb;
		border-bottom: 1px solid #d6d6d6;
	}
	.quick .item {
		display: flex;
		justify-content: center;
		width: 24px;
	}
	.quick .drop {
		display: flex;
		justify-content: center;
		width: 12px;
	}
	.sep {
		width: 6px;
		height: 24px;
		border-right: 1px solid #bdbdbd;
	}

	.options {
		flex: none;
		height: 27px;
		padding-left: 9px;
		line-height: 27px;
		color: #888;
		background: #e3eed7;
		border-bottom: 1px solid #d0d4cb;
	}

	.work {
		display: flex;
		flex: 1;
		min-height: 0;
	}
	aside {
		display: flex;
		flex-direction: column;
		flex: none;
		width: 222px;
		border-right: 2px solid #c4c4c4;
	}
	.dock {
		padding: 0 2px 0 2px;
	}
	.dock header {
		display: flex;
		align-items: center;
		justify-content: space-between;
		height: 22px;
		padding: 0 3px;
	}
	.type {
		display: flex;
		align-items: center;
		gap: 4px;
		width: 100%;
		height: 68px;
		padding: 0 2px;
		border: 1px solid #ddd;
		border-bottom: none;
		text-align: left;
		line-height: 16px;
	}
	.swatch {
		width: 66px;
		height: 66px;
		border: 1px solid #ccc;
		background: linear-gradient(#fff 21px, #8796b1 21px 43px, #fff 43px);
	}
	.type .name {
		flex: 1;
		padding-top: 2px;
	}
	.instance {
		display: flex;
		align-items: center;
		height: 21px;
	}
	.instance button {
		display: flex;
		align-items: center;
		gap: 1px;
		margin-left: 2px;
	}
	.instance .icon {
		width: 10px;
		height: 10px;
	}
	select {
		appearance: none;
		background: url("data:image/svg+xml,%3Csvg xmlns='http://www.w3.org/2000/svg' width='8' height='8'%3E%3Cpath d='M1 2.500l3 3 3-3' fill='none' stroke='%23777'/%3E%3C/svg%3E") no-repeat right 3px center;
	}
	.instance select {
		flex: 1;
		height: 20px;
		padding-left: 2px;
		background-color: #e3e3e3;
		border: 1px solid #bbb;
	}
	.grid,
	.tree {
		display: flex;
	}
	.grid {
		height: 131px;
		overflow: hidden;
	}
	table {
		flex: 1;
		table-layout: fixed;
		border-collapse: collapse;
		background: #fff;
	}
	.key,
	.value {
		width: 94px;
	}
	tr {
		height: 19px;
	}
	th,
	td {
		padding: 0 0 0 1px;
		border-bottom: 1px solid #ccc;
		border-right: 1px solid #ccc;
		font-weight: 400;
		line-height: 18px;
		text-align: left;
		white-space: nowrap;
	}
	th {
		padding-left: 8px;
	}
	td:last-child {
		border-right: none;
	}
	.group th {
		padding-left: 1px;
		background: #dcdcdc;
		border: none;
	}
	tr.group {
		height: 18px;
	}
	input[type='text'] {
		display: block;
		width: 93px;
		height: 18px;
		border: 1px solid #777;
		margin-left: -1px;
	}
	input[type='checkbox'] {
		display: block;
		appearance: none;
		width: 13px;
		height: 13px;
		border: 1px solid #333;
		background: #fff;
	}
	input[type='checkbox']:checked::before {
		content: '';
		display: block;
		width: 8px;
		height: 4px;
		margin: 2px 0 0 1px;
		border: solid #333;
		border-width: 0 0 1px 1px;
		transform: rotate(-45deg);
	}
	input:disabled {
		border-color: #ccc;
	}
	.vbar {
		display: flex;
		flex-direction: column;
		align-items: center;
		flex: none;
		width: 16px;
		padding: 4px 0;
		background: #f0f0f0;
	}
	.vbar .thumb {
		width: 16px;
		height: 22px;
		margin: 4px 0 auto;
		background: #cbcbcb;
	}
	.props footer {
		display: flex;
		align-items: center;
		justify-content: space-between;
		height: 25px;
		padding-left: 1px;
	}
	.props a {
		color: #1668ab;
	}
	.props footer button {
		width: 75px;
		height: 21px;
		background: #c9c9c9;
		color: #888;
	}
	.browser {
		display: flex;
		flex-direction: column;
		flex: 1;
		min-height: 0;
		margin-top: 2px;
		padding-bottom: 2px;
		border-top: 2px solid #d0d0d0;
	}
	.browser header {
		flex: none;
		height: 19px;
	}
	.tree {
		flex: 1;
		min-height: 0;
	}
	.tree .vbar .thumb {
		height: 80px;
	}
	.nodes {
		flex: 1;
		overflow: hidden;
		padding: 1px 0 0 4px;
		background: #fff;
	}
	.node {
		display: flex;
		align-items: center;
		height: 17px;
	}
	.fold {
		display: flex;
		align-items: center;
		justify-content: center;
		width: 9px;
		height: 9px;
		border: 1px solid #aaa;
		background: #fff;
	}
	.fold::before {
		content: '';
		width: 5px;
		height: 1px;
		background: #336;
	}
	.link {
		width: 7px;
		border-top: 1px solid #ddd;
		margin-right: 1px;
	}
	.root .icon {
		margin-right: 2px;
	}
	.active {
		padding: 0 1px;
		line-height: 17px;
		background: #e4e4e4;
	}
	.branch {
		margin-left: 4px;
		padding-left: 15px;
		border-left: 1px solid #ddd;
	}
	.inner {
		padding-left: 19px;
	}
	.branch .link {
		width: 9px;
	}
	.tree ul {
		border-left: 1px solid #ddd;
	}
	.tree li {
		display: flex;
		align-items: center;
		gap: 2px;
		height: 17px;
		white-space: nowrap;
	}
	.tree li::before {
		content: '';
		width: 12px;
		height: 1px;
		background: #ddd;
	}
	.hbar {
		display: flex;
		align-items: center;
		flex: none;
		height: 17px;
		padding: 0 20px 0 5px;
		background: #f0f0f0;
	}
	.hbar .thumb {
		width: 161px;
		height: 16px;
		margin: 0 auto 0 4px;
		background: #cbcbcb;
	}

	main {
		display: flex;
		flex-direction: column;
		flex: 1;
		min-width: 0;
		padding-left: 3px;
	}
	.tabs {
		display: flex;
		flex: none;
		height: 23px;
		padding-bottom: 1px;
		background: #cbcbcb;
	}
	.tab {
		display: flex;
		align-items: center;
		gap: 7px;
		width: 126px;
		padding: 0 3px;
	}
	.tab.open {
		width: 127px;
		padding: 0 5px;
		background: #fff;
	}
	.tab b {
		font-weight: 600;
	}
	.tab .cross {
		margin-left: auto;
	}
	.tabs .list {
		margin-left: auto;
		padding: 0 2px;
	}
	.stage {
		display: flex;
		flex: 1;
		min-height: 0;
	}
	.canvas {
		position: relative;
		flex: 1;
		min-width: 0;
		border: 2px solid #2edfe6;
		background: #fff;
	}
	.scene {
		width: 100%;
		height: 100%;
	}
	.levels {
		fill: none;
		stroke: #777;
		stroke-dasharray: 24 5 5 5;
	}
	.roof {
		fill: none;
		stroke: #3d63c0;
		stroke-width: 1;
	}
	.hidden {
		stroke-opacity: 0.6;
	}
	.walls {
		fill: none;
		stroke: #777;
		stroke-width: 1;
	}
	.orbit {
		fill: none;
		stroke: #222;
		stroke-width: 1.5;
	}
	.cube {
		stroke: #bbb;
		stroke-width: 1;
	}
	.cube text {
		stroke: none;
		fill: #777;
	}
	.face {
		font: bold 7px 'Liberation Sans', sans-serif;
	}
	.tiny {
		font: bold 4px 'Liberation Sans', sans-serif;
	}
	.badge {
		position: absolute;
		top: -1px;
		left: -1px;
		padding: 0 1px;
		line-height: 17px;
		font-family: 'Liberation Sans', sans-serif;
		font-size: 13px;
		color: #123;
		background: #00effb;
	}
	.wheel {
		position: absolute;
		top: 118px;
		right: -1px;
		width: 31px;
		border: 1px solid #c2c2c2;
		border-radius: 3px;
		background: #f2f2f2;
	}
	.plain {
		width: 19px;
		padding: 5px 0 4px 1px;
	}
	.plain .thumb {
		height: 17px;
		margin: auto 0;
	}
	.controls {
		display: flex;
		align-items: center;
		flex: none;
		height: 19px;
		padding-right: 2px;
		border-bottom: 1px solid #fff;
		background: #f0f0f0;
	}
	.ratio {
		width: 77px;
		font-size: 11px;
	}
	.controls .item {
		display: flex;
		justify-content: center;
		width: 21px;
	}
	.controls .hbar {
		flex: 1;
		padding: 0 12px 0 3px;
	}
	.controls .hbar .thumb {
		width: 17px;
		margin: 0 auto;
	}
	.grip {
		width: 10px;
		height: 10px;
	}

	.status {
		display: flex;
		align-items: center;
		flex: none;
		height: 26px;
		padding: 0 30px 0 2px;
		background: #cbcbcb;
	}
	.hint {
		width: 363px;
	}
	.status select {
		height: 17px;
		padding-left: 1px;
		background-color: #fff;
		color: #777;
	}
	.sets {
		width: 203px;
		margin: 0 2px 0 5px;
	}
	.design {
		width: 203px;
		margin-left: 2px;
	}
	.count {
		width: 17px;
	}
	.status .item {
		display: flex;
		justify-content: center;
		width: 21px;
	}
	.picks {
		display: flex;
		align-items: center;
		margin-left: auto;
	}
</style>
